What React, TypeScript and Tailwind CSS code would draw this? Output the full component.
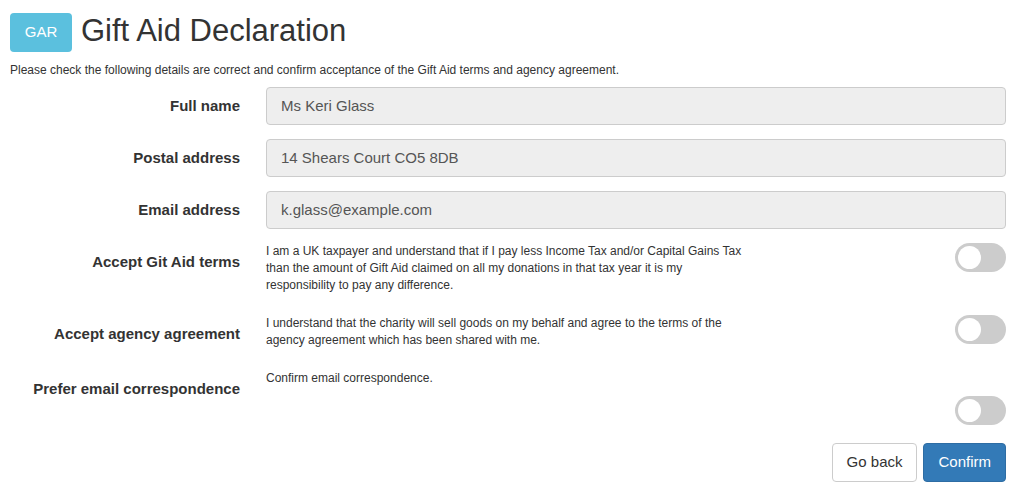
import { useState } from 'react';

const fields = [
    { label: 'Full name', value: 'Ms Keri Glass' },
    { label: 'Postal address', value: '14 Shears Court CO5 8DB' },
    { label: 'Email address', value: 'k.glass@example.com' },
];

function Toggle({ on, onChange }: { on: boolean; onChange: () => void }) {
    return (
        <button
            onClick={onChange}
            className={`relative w-[51px] h-[29px] shrink-0 rounded-full transition-colors ${on ? 'bg-[#337ab7]' : 'bg-[#cccccc]'}`}
            aria-pressed={on}
        >
            <span
                className={`absolute top-[3px] w-[23px] h-[23px] rounded-full bg-white transition-all ${on ? 'left-[25px]' : 'left-[3px]'}`}
            />
        </button>
    );
}

export default function App() {
    const [terms, setTerms] = useState(false);
    const [agency, setAgency] = useState(false);
    const [email, setEmail] = useState(false);

    const labelCls = 'w-[230px] shrink-0 text-right text-[15px] leading-[20px] font-bold text-[#333] pt-[9px]';

    return (
        <div className="w-[1024px] h-[501px] bg-white pl-[10px] pr-[18px] font-['Liberation_Sans',Arial,sans-serif] text-[#333]">
            {/* Header */}
            <div className="flex items-center gap-[9px] pt-[13px]">
                <span className="w-[62px] h-[39px] rounded-[4px] bg-[#5bc0de] text-white text-[15px] flex items-center justify-center">
                    GAR
                </span>
                <h1 className="text-[31px] leading-[36px] text-[#333] -mt-[3px]">Gift Aid Declaration</h1>
            </div>
            <p className="text-[12px] leading-[17px] mt-[10px]">
                Please check the following details are correct and confirm acceptance of the Gift Aid terms and agency agreement.
            </p>

            <div className="flex flex-col gap-[14px] mt-[8px]">
                {fields.map((f) => (
                    <div key={f.label} className="flex">
                        <label className={labelCls}>{f.label}</label>
                        <div className="ml-[26px] flex-1 h-[38px] rounded-[4px] border border-[#ccc] bg-[#eeeeee] text-[15px] text-[#555] flex items-center px-[14px]">
                            {f.value}
                        </div>
                    </div>
                ))}

                <div className="flex">
                    <label className={labelCls}>Accept Git Aid terms</label>
                    <div className="ml-[26px] flex-1 flex justify-between">
                        <p className="w-[486px] text-[12px] leading-[17px] text-[#333] mb-[7px]">
                            I am a UK taxpayer and understand that if I pay less Income Tax and/or Capital Gains Tax than the amount of Gift Aid claimed on all my donations in that tax year it is my responsibility to pay any difference.
                        </p>
                        <Toggle on={terms} onChange={() => setTerms(!terms)} />
                    </div>
                </div>

                <div className="flex">
                    <label className={labelCls}>Accept agency agreement</label>
                    <div className="ml-[26px] flex-1 flex justify-between">
                        <p className="w-[486px] text-[12px] leading-[17px] text-[#333] mb-[7px]">
                            I understand that the charity will sell goods on my behalf and agree to the terms of the agency agreement which has been shared with me.
                        </p>
                        <Toggle on={agency} onChange={() => setAgency(!agency)} />
                    </div>
                </div>

                <div className="flex">
                    <label className={labelCls}>Prefer email correspondence</label>
                    <div className="ml-[26px] flex-1 flex flex-col">
                        <p className="text-[12px] leading-[17px] text-[#333]">Confirm email correspondence.</p>
                        <div className="flex justify-end mt-[9px]">
                            <Toggle on={email} onChange={() => setEmail(!email)} />
                        </div>
                    </div>
                </div>
            </div>

            {/* Actions */}
            <div className="flex justify-end gap-[6px] mt-[18px]">
                <button className="h-[39px] px-[14px] rounded-[4px] border border-[#ccc] bg-white text-[15px] text-[#333]">
                    Go back
                </button>
                <button className="h-[39px] px-[14px] rounded-[4px] border border-[#2e6da4] bg-[#337ab7] text-[15px] text-white">
                    Confirm
                </button>
            </div>
        </div>
    );
}
